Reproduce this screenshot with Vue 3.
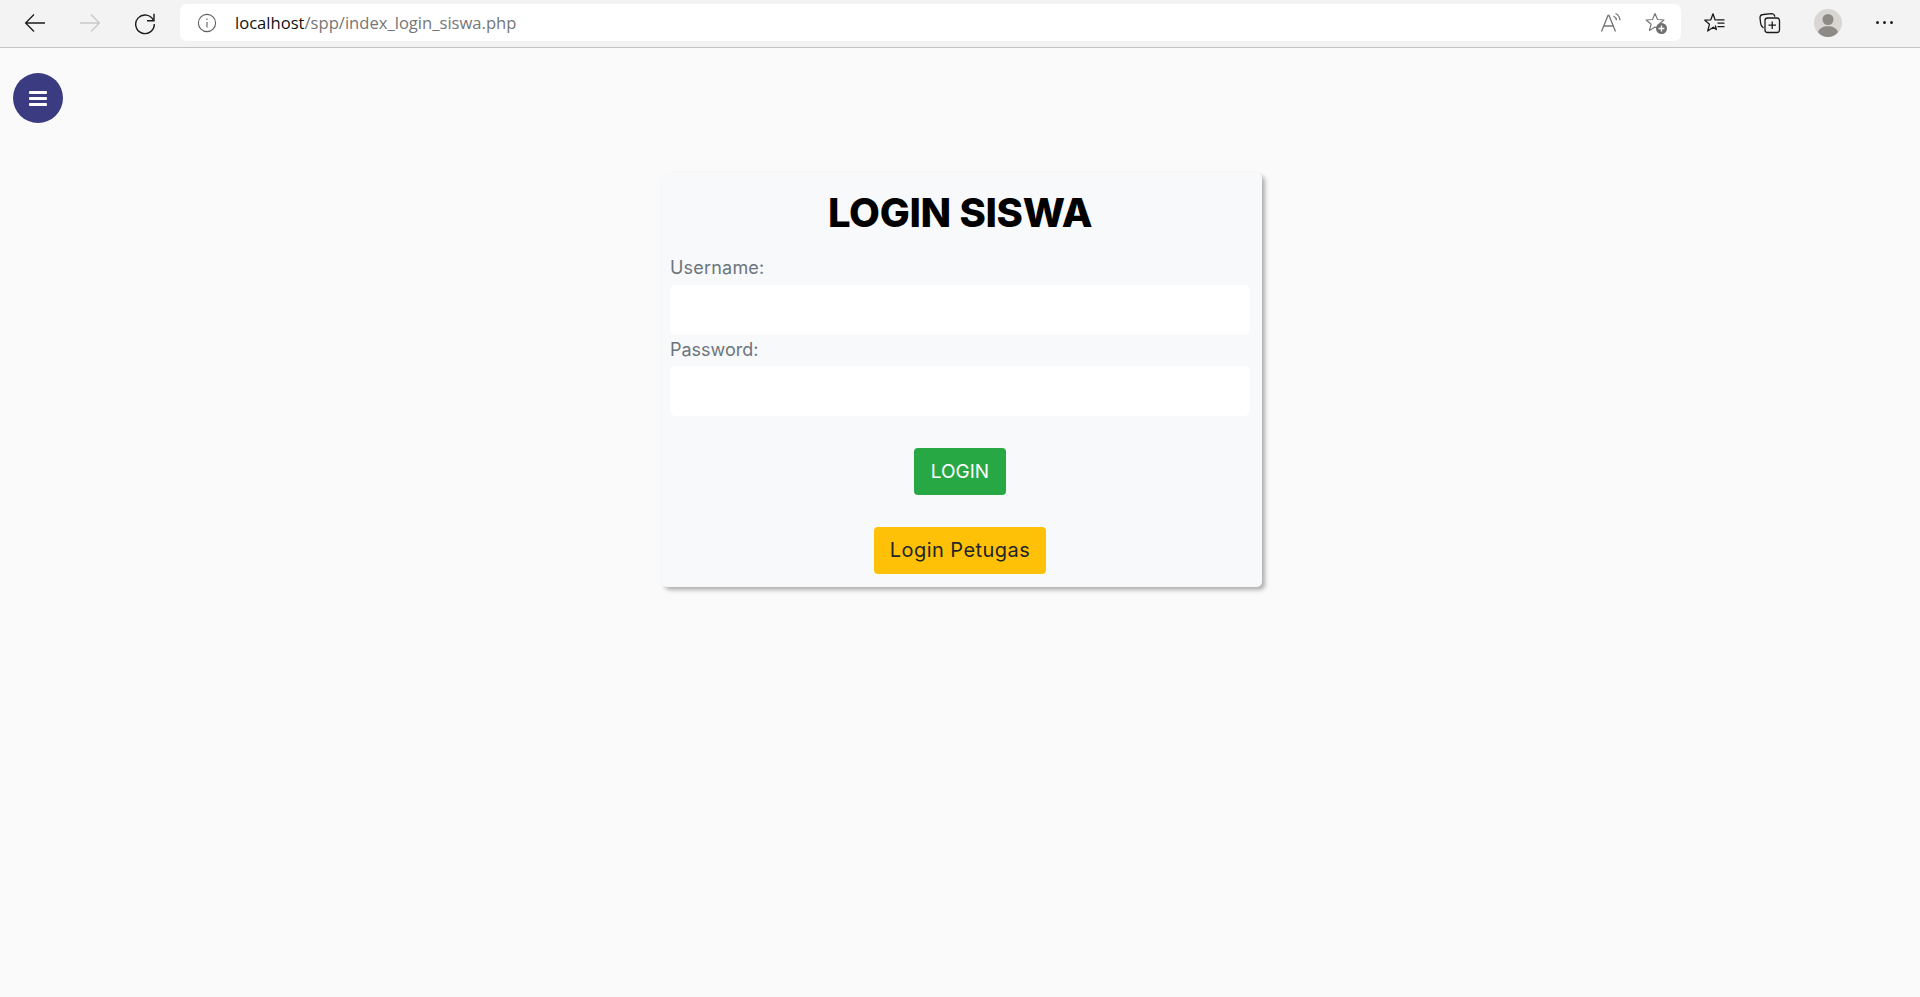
<template>
  <div class="page">
    <header class="toolbar">
      <button class="tool-btn">
        <svg width="24" height="24" viewBox="0 0 24 24" fill="none" stroke="#1b1b1b" stroke-width="1.3">
          <path d="M22 12H3M11 3.500L2.600 12l8.400 8.500" />
        </svg>
      </button>
      <button class="tool-btn">
        <svg width="24" height="24" viewBox="0 0 24 24" fill="none" stroke="#c9c9c9" stroke-width="1.3">
          <path d="M2 12h19M13 3.500l8.400 8.500-8.400 8.500" />
        </svg>
      </button>
      <button class="tool-btn">
        <svg width="24" height="24" viewBox="0 0 24 24" fill="none" stroke="#1b1b1b" stroke-width="1.4">
          <path d="M20.500 9.500A9.300 9.300 0 1 0 21.300 13" />
          <path d="M21 2.800v7h-7" />
        </svg>
      </button>
      <div class="address">
        <svg class="info" width="20" height="20" viewBox="0 0 20 20" fill="none" stroke="#5f5f5f" stroke-width="1.1">
          <circle cx="10" cy="10" r="8.600" />
          <path d="M10 9v5.500M10 5.600v1.300" />
        </svg>
        <span class="url"><b>localhost</b>/spp/index_login_siswa.php</span>
        <div class="address-end">
          <svg width="26" height="24" viewBox="0 0 26 24" fill="none" stroke="#757575" stroke-width="1.300">
            <path d="M2.500 20.500L9 4.500h1l6.500 16M4.900 15h9.200" />
            <path d="M14.500 5c1.800 1 2.800 2.400 3 4.300M16.500 2.500c2.800 1.400 4.300 3.800 4.500 6.800" />
          </svg>
          <svg width="26" height="26" viewBox="0 0 26 26" fill="none">
            <path d="M12 3.500l2.500 6 6.500.5-5 4.200 1.600 6.300L12 17l-5.500 3.500 1.600-6.300-5-4.200 6.400-.5z" stroke="#7a7a7a" stroke-width="1.200" stroke-linejoin="round" />
            <circle cx="18.500" cy="18.500" r="5.500" fill="#6f6f6f" />
            <path d="M18.500 15.600v5.800M15.600 18.500h5.800" stroke="#fff" stroke-width="1.300" />
          </svg>
        </div>
      </div>
      <div class="tools-right">
        <button class="tool-btn">
          <svg width="24" height="24" viewBox="0 0 24 24" fill="none" stroke="#1b1b1b" stroke-width="1.300">
            <path d="M13.500 8.800H12L10 2.800 7.800 8.800 1.800 9.200l4.700 4-1.800 6.800 5.600-3.800 3 2.300-.9-4" stroke-linejoin="round" />
            <path d="M13.500 8.800h8M14.500 12.200h7M14.500 15.600h7" />
          </svg>
        </button>
        <button class="tool-btn">
          <svg width="24" height="24" viewBox="0 0 24 24" fill="none" stroke="#1b1b1b" stroke-width="1.300">
            <path d="M5.500 17C3.500 15.500 2.600 14 2.600 12L2 7c0-2.200 1.400-3.500 3.400-3.500l8-.8c1.800 0 3 .7 3.500 3" />
            <rect x="7" y="7" width="14.500" height="14.500" rx="2.500" />
            <path d="M14.200 10.500v7.500M10.500 14.200H18" />
          </svg>
        </button>
        <div class="avatar">
          <svg width="28" height="28" viewBox="0 0 28 28">
            <circle cx="14" cy="14" r="14" fill="#d8d6d3" />
            <circle cx="14" cy="10.500" r="5.500" fill="#8d8985" />
            <path d="M4 23c1.500-4 5-5.800 10-5.800S22.500 19 24 23c-2.500 3.200-6 5-10 5s-7.500-1.800-10-5z" fill="#8d8985" />
          </svg>
        </div>
        <button class="tool-btn dots">
          <i></i><i></i><i></i>
        </button>
      </div>
    </header>

    <main class="content">
      <button class="menu-btn">
        <i></i><i></i><i></i>
      </button>

      <form class="card" @submit.prevent>
        <h1>LOGIN SISWA</h1>
        <label class="user-label" for="username">Username:</label>
        <input id="username" type="text" />
        <label class="pass-label" for="password">Password:</label>
        <input id="password" type="password" />
        <button class="btn green">LOGIN</button>
        <button class="btn yellow">Login Petugas</button>
      </form>
    </main>
  </div>
</template>

<script setup>
</script>

<style>
html,
body {
  margin: 0;
  background: #fafafa;
}
</style>

<style scoped>
.page {
  height: 997px;
  display: flex;
  flex-direction: column;
  font-family: "Inter", "Noto Sans", sans-serif;
  overflow: hidden;
}

.toolbar {
  height: 45px;
  padding-bottom: 2px;
  flex: none;
  display: flex;
  align-items: center;
  background: #f3f3f3;
  border-bottom: 1px solid #c4c4c4;
  padding-left: 13px;
  box-sizing: content-box;
}

.tool-btn {
  width: 44px;
  height: 36px;
  margin-right: 11px;
  border: none;
  background: none;
  padding: 0;
  display: flex;
  align-items: center;
  justify-content: center;
}

.address {
  width: 1501px;
  height: 37px;
  margin-left: 2px;
  background: #fff;
  border-radius: 7px;
  display: flex;
  align-items: center;
  padding: 0 12px 0 17px;
  box-sizing: border-box;
}

.info {
  margin-right: 18px;
}

.url {
  font-family: "Open Sans", sans-serif;
  font-size: 16.6px;
  color: #767676;
}

.url b {
  font-weight: 400;
  color: #111;
}

.address-end {
  margin-left: auto;
  display: flex;
  gap: 18px;
  align-items: center;
}

.tools-right {
  display: flex;
  align-items: center;
  margin-left: 12px;
}

.tools-right .tool-btn {
  margin-right: 11px;
}

.avatar {
  width: 28px;
  height: 28px;
  margin: 0 32px 0 11px;
}

.dots {
  width: 20px;
  gap: 4px;
}

.dots i {
  width: 3px;
  height: 3px;
  background: #222;
  border-radius: 50%;
}

.content {
  flex: 1;
  position: relative;
  display: flex;
  justify-content: center;
  align-items: flex-start;
  padding-top: 125px;
}

.menu-btn {
  position: absolute;
  left: 13px;
  top: 25px;
  width: 50px;
  height: 50px;
  border: none;
  border-radius: 50%;
  background: #3a3b80;
  display: flex;
  flex-direction: column;
  align-items: center;
  justify-content: center;
  gap: 3px;
  padding: 0;
}

.menu-btn i {
  width: 18px;
  height: 3px;
  background: #fff;
  border-radius: 1px;
}

.card {
  width: 600px;
  margin-left: 4px;
  box-sizing: border-box;
  padding: 16px 12px 13px 8px;
  background: #f8f9fa;
  border-radius: 5px;
  box-shadow: 3px 3px 4px rgba(0, 0, 0, 0.3);
  display: flex;
  flex-direction: column;
  align-items: center;
}

h1 {
  margin: 0 0 17px;
  font-size: 40px;
  line-height: 48px;
  font-weight: 800;
  letter-spacing: -0.3px;
  color: #000;
}

label {
  align-self: stretch;
  font-size: 18px;
  line-height: 27px;
  margin-bottom: 4px;
  color: #6c757d;
}

.user-label {
  letter-spacing: 0.2px;
}

.pass-label {
  padding-top: 1px;
  margin-bottom: 3px;
}

input {
  align-self: stretch;
  height: 50px;
  padding: 0 12px;
  border: none;
  border-radius: 6px;
  background: #fff;
  outline: none;
  box-sizing: border-box;
}

.btn {
  height: 47px;
  padding: 0 17px;
  border: none;
  border-radius: 4px;
  font-family: inherit;
  font-size: 19px;
}

.green {
  margin-top: 32px;
  background: #28a745;
  color: #fff;
}

.yellow {
  margin-top: 32px;
  padding: 0 16px 1px;
  background: #ffc107;
  color: #212529;
  font-size: 20px;
  letter-spacing: 0.45px;
}
</style>
